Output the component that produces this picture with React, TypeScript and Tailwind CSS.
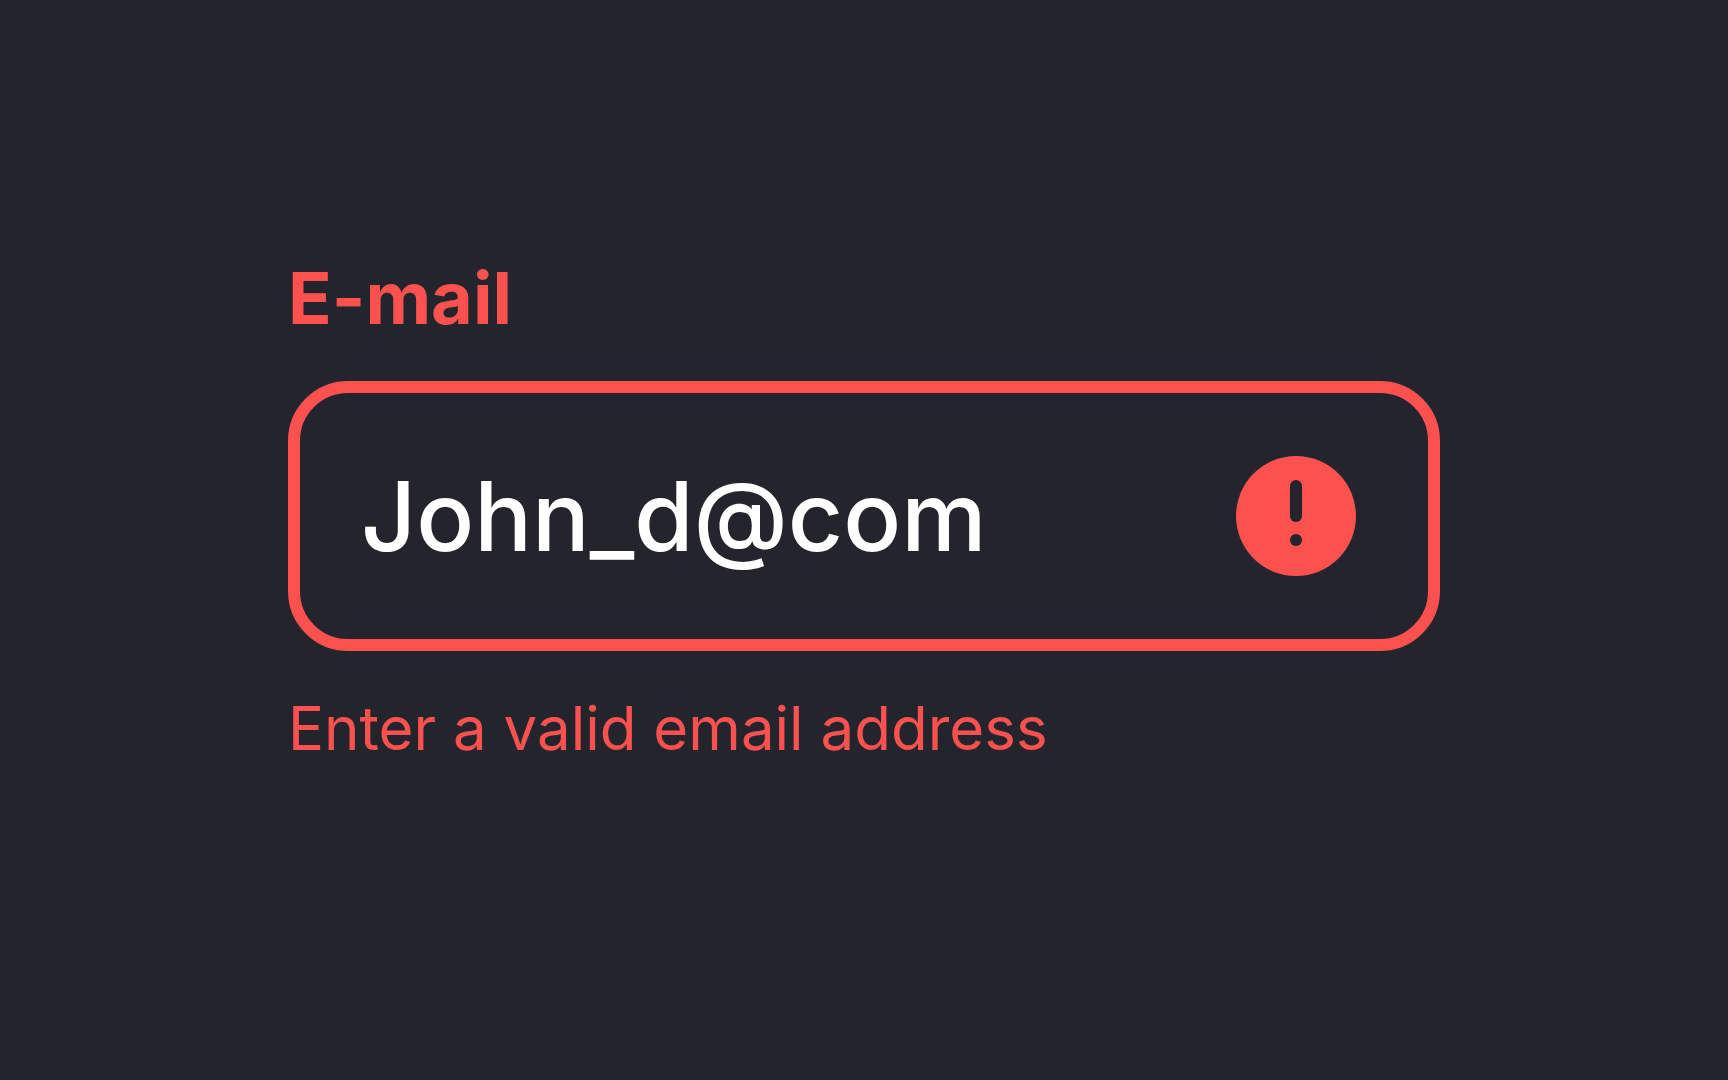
import { useState } from "react";

function ErrorIcon() {
  return (
    <svg
      className="size-[120px] shrink-0"
      viewBox="0 0 120 120"
      fill="none"
      aria-hidden="true"
    >
      <circle cx="60" cy="60" r="60" fill="#FD5150" />
      <path
        d="M60 30V60"
        stroke="#24242D"
        strokeWidth="12"
        strokeLinecap="round"
      />
      <circle cx="60" cy="84" r="6" fill="#24242D" />
    </svg>
  );
}

export default function App() {
  const [email, setEmail] = useState("John_d@com");

  return (
    <main className="flex min-h-screen items-center justify-center bg-[#24242d] pb-15 font-[Inter,sans-serif]">
      <div className="flex w-2/3 flex-col">
        <label
          htmlFor="email"
          className="mb-10 text-[72px] leading-[86px] font-bold text-[#fd5150]"
        >
          E-mail
        </label>
        <div className="flex items-center rounded-[60px] border-12 border-[#fd5150] py-[63px] pr-[72px] pl-[61px]">
          <input
            id="email"
            type="text"
            value={email}
            onChange={(e) => setEmail(e.target.value)}
            aria-invalid="true"
            aria-describedby="email-error"
            className="min-w-0 flex-1 bg-transparent text-[96px] leading-[120px] font-medium text-white outline-none"
          />
          <ErrorIcon />
        </div>
        <p
          id="email-error"
          className="mt-10 text-[60px] leading-[74px] text-[#fd5150]"
        >
          Enter a valid email address
        </p>
      </div>
    </main>
  );
}
